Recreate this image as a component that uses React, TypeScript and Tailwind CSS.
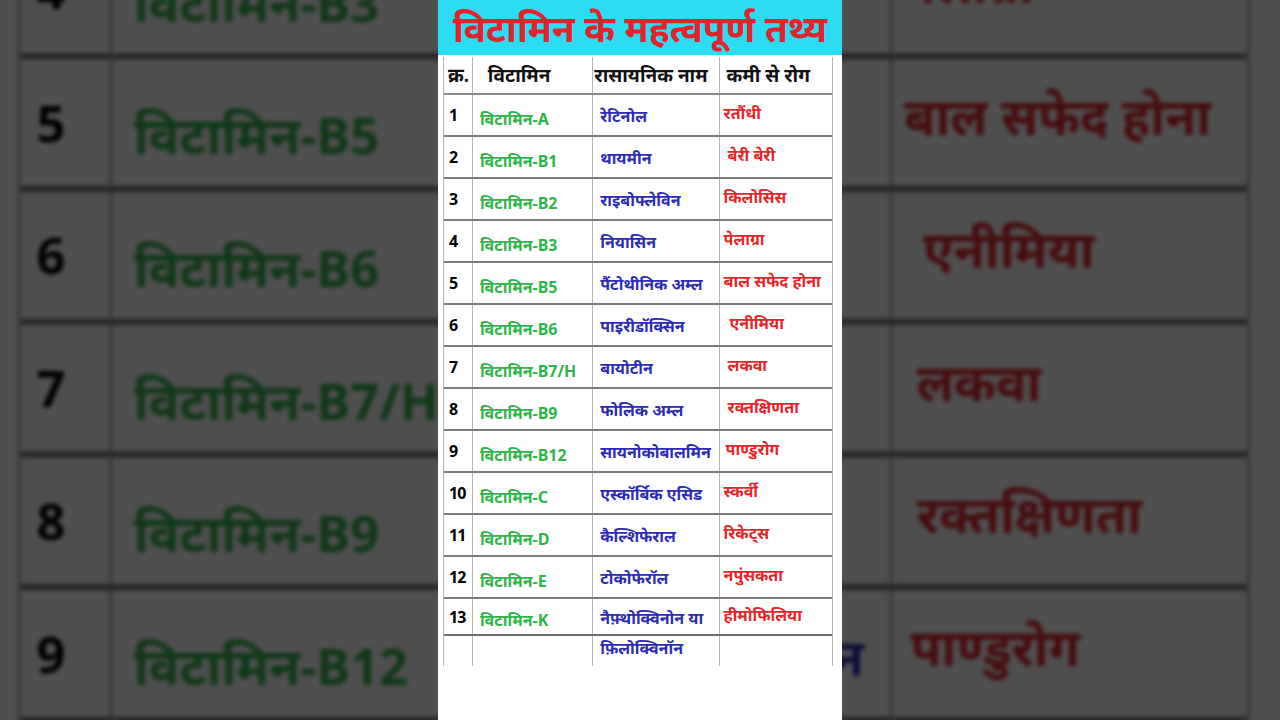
import React from "react";

type Row = { n: string; v: string; c: string; d: string; dPad?: string };

const rows: Row[] = [
  { n: "1", v: "विटामिन-A", c: "रेटिनोल", d: "रतौंधी" },
  { n: "2", v: "विटामिन-B1", c: "थायमीन", d: "बेरी बेरी", dPad: "pl-[8px]" },
  { n: "3", v: "विटामिन-B2", c: "राइबोफ्लेविन", d: "किलोसिस" },
  { n: "4", v: "विटामिन-B3", c: "नियासिन", d: "पेलाग्रा" },
  { n: "5", v: "विटामिन-B5", c: "पैंटोथीनिक अम्ल", d: "बाल सफेद होना" },
  { n: "6", v: "विटामिन-B6", c: "पाइरीडॉक्सिन", d: "एनीमिया", dPad: "pl-[10px]" },
  { n: "7", v: "विटामिन-B7/H", c: "बायोटीन", d: "लकवा", dPad: "pl-[8px]" },
  { n: "8", v: "विटामिन-B9", c: "फोलिक अम्ल", d: "रक्तक्षिणता", dPad: "pl-[8px]" },
  { n: "9", v: "विटामिन-B12", c: "सायनोकोबालमिन", d: "पाण्डुरोग", dPad: "pl-[6px]" },
  { n: "10", v: "विटामिन-C", c: "एस्कॉर्बिक एसिड", d: "स्कर्वी" },
  { n: "11", v: "विटामिन-D", c: "कैल्शिफेराल", d: "रिकेट्स" },
  { n: "12", v: "विटामिन-E", c: "टोकोफेरॉल", d: "नपुंसकता" },
];

const font = "font-['Noto_Sans','Noto_Sans_Devanagari','Lohit_Devanagari',sans-serif]";

function Cells({ r }: { r: Row }) {
  return (
    <>
      <div className="w-[29px] pl-[5px] flex items-center text-[16px] font-bold text-black border-r border-[#b5b5b5] tracking-[-1px]">
        {r.n}
      </div>
      <div className="w-[121px] pl-[7px] pt-[7px] flex items-center text-[16px] font-bold text-[#2fb548] border-r border-[#b5b5b5] whitespace-nowrap">
        {r.v}
      </div>
      <div className="w-[127px] pl-[7px] pt-[2px] flex items-center text-[16px] font-bold text-[#2c2cb4] border-r border-[#b5b5b5] whitespace-nowrap">
        {r.c}
      </div>
      <div className={`w-[113px] ${r.dPad ?? "pl-[4px]"} pb-[4px] flex items-center text-[16px] font-bold text-[#e2262a] whitespace-nowrap`}>
        {r.d}
      </div>
    </>
  );
}

function Column() {
  return (
    <div className={`w-[404px] h-[720px] bg-white flex flex-col ${font}`}>
      <div className="h-[55px] bg-[#2bdcf3] flex items-center justify-center text-[37px] font-bold text-[#e3222b] whitespace-nowrap">
        विटामिन के महत्वपूर्ण तथ्य
      </div>
      <div className="ml-[5px] w-[390px] mt-[2px] border-x border-[#b5b5b5] flex flex-col">
        <div className="h-[38px] flex border-b-2 border-[#8a8a8a] text-[19px] font-bold text-[#111]">
          <div className="w-[29px] pl-[4px] flex items-center border-r border-[#b5b5b5]">क्र.</div>
          <div className="w-[121px] pl-[15px] flex items-center border-r border-[#b5b5b5]">विटामिन</div>
          <div className="w-[127px] pl-[1px] flex items-center border-r border-[#b5b5b5] whitespace-nowrap">रासायनिक नाम</div>
          <div className="w-[113px] pl-[7px] flex items-center whitespace-nowrap">कमी से रोग</div>
        </div>
        {rows.map((r) => (
          <div key={r.n} className="h-[42px] flex border-b-2 border-[#7d7d7d]">
            <Cells r={r} />
          </div>
        ))}
        <div className="h-[37px] flex border-b-2 border-[#6e6e6e]">
          <Cells r={{ n: "13", v: "विटामिन-K", c: "नैफ़्थोक्विनोन या", d: "हीमोफिलिया" }} />
        </div>
        <div className="h-[30px] flex">
          <div className="w-[29px] border-r border-[#b5b5b5]" />
          <div className="w-[121px] border-r border-[#b5b5b5]" />
          <div className="w-[127px] pl-[7px] pb-[6px] flex items-center text-[16px] font-bold text-[#2c2cb4] border-r border-[#b5b5b5] whitespace-nowrap">
            फ़िलोक्विनॉन
          </div>
          <div className="w-[113px]" />
        </div>
      </div>
      <div className="flex-1 bg-white" />
    </div>
  );
}

export default function App() {
  return (
    <div className="relative w-full h-[720px] overflow-hidden bg-[#4e4e4e]">
      <div className="absolute inset-0 flex justify-center brightness-[0.31] blur-[2px]">
        <div className="scale-[3.16] translate-y-[6px] origin-center">
          <Column />
        </div>
      </div>
      <div className="relative h-full flex justify-center">
        <Column />
      </div>
    </div>
  );
}
